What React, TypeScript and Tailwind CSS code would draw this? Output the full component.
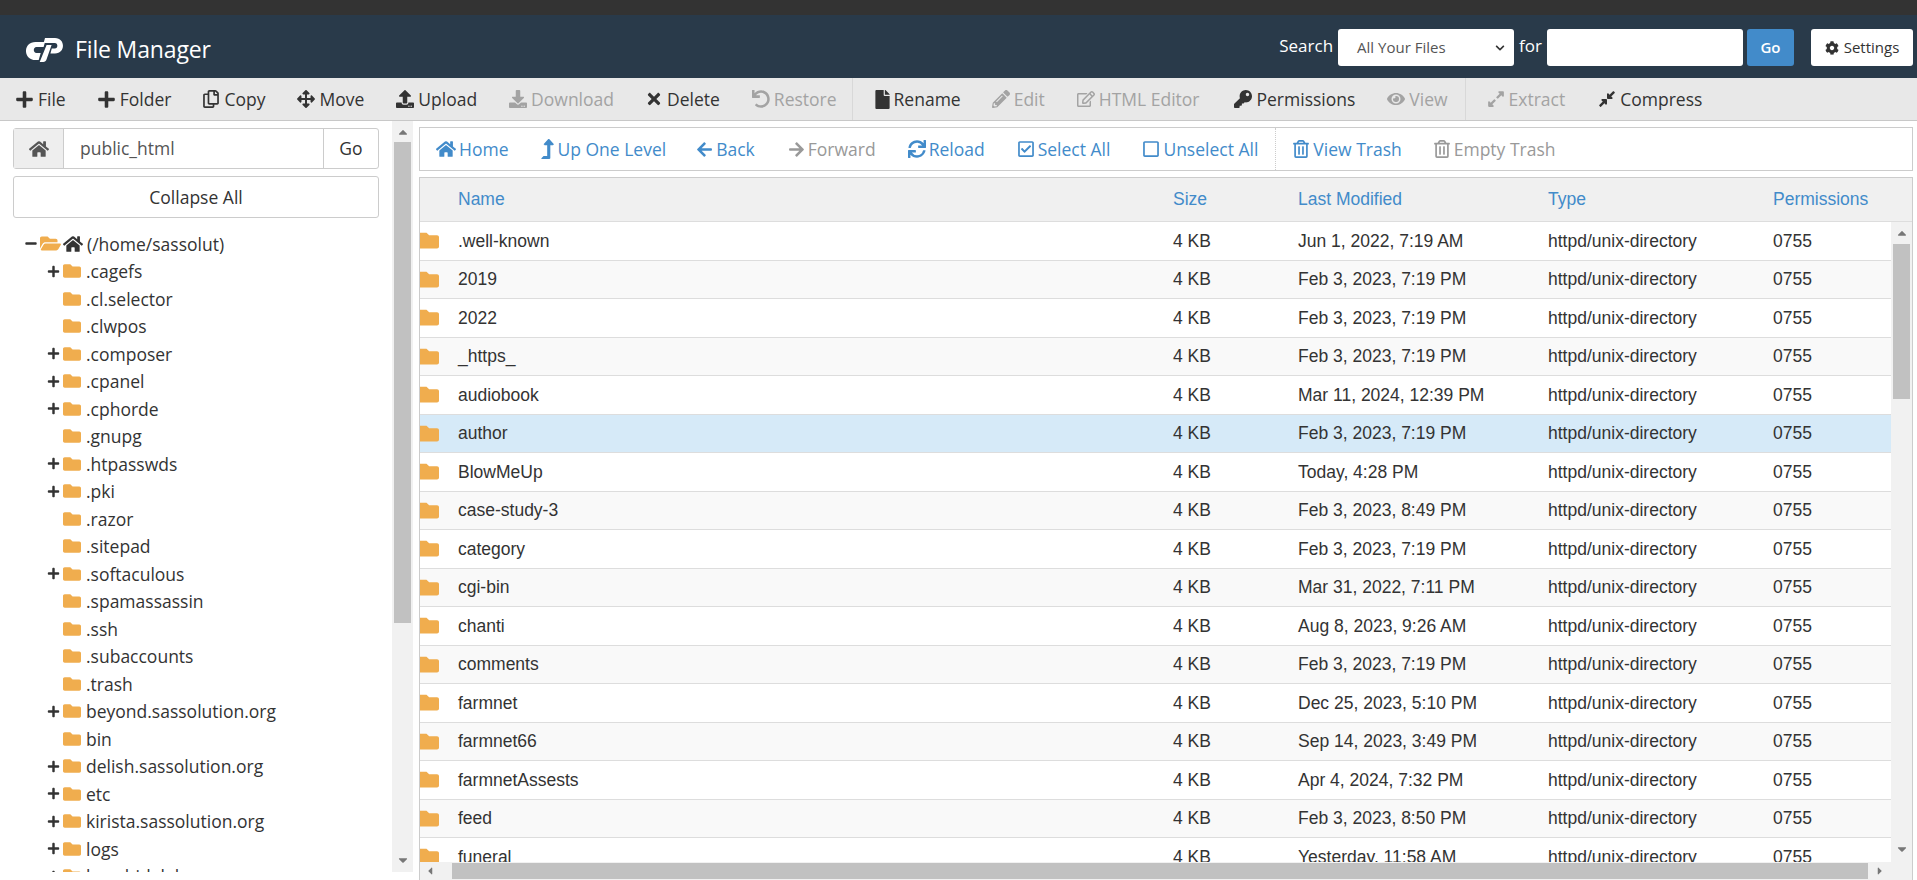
import { ReactNode } from "react";
import {
  FaPlus,
  FaFolder,
  FaFolderOpen,
  FaRegCopy,
  FaArrowsAlt,
  FaUpload,
  FaDownload,
  FaTimes,
  FaUndo,
  FaFile,
  FaPencilAlt,
  FaRegEdit,
  FaKey,
  FaEye,
  FaExpandAlt,
  FaCompressAlt,
  FaHome,
  FaLevelUpAlt,
  FaArrowLeft,
  FaArrowRight,
  FaSync,
  FaRegCheckSquare,
  FaRegSquare,
  FaRegTrashAlt,
  FaCog,
  FaMinus,
  FaCaretUp,
  FaCaretDown,
  FaCaretLeft,
  FaCaretRight,
  FaChevronDown,
} from "react-icons/fa";

const openSans = "font-['Open_Sans',sans-serif]";

const CpLogo = () => (
  <svg viewBox="0 0 37 24" className="h-[24px] w-[37px] fill-white">
    <path d="M9.5 4H19l-1.4 5H10.5c-3.6 0-3.6 6 0 6h4.2L12.7 22H9.5C-3.2 22-3.2 4 9.5 4z" />
    <path d="M19 0h10c10.6 0 10.6 15.5 0 15.5h-4.6l1.4-5h3c3.4 0 3.4-5.5 0-5.5H17.6z" />
    <path d="M20.6 7h5L20.5 21.5c-.5 1.6-1.6 2.5-3.2 2.5h-3.6z" />
  </svg>
);

const ToolButton = ({ icon, label, off, className }: { icon: ReactNode; label: string; off?: boolean; className?: string }) => (
  <span className={`flex items-center gap-[4px] ${off ? "text-[#a3a3a3]" : "text-[#333]"} ${className ?? ""}`}>
    {icon}
    {label}
  </span>
);

const NavButton = ({ icon, label, off, className }: { icon: ReactNode; label: string; off?: boolean; className?: string }) => (
  <span className={`flex items-center gap-[3px] ${off ? "text-[#999]" : "text-[#428bca]"} ${className ?? ""}`}>
    {icon}
    {label}
  </span>
);

const tree: [string, boolean][] = [
  [".cagefs", true],
  [".cl.selector", false],
  [".clwpos", false],
  [".composer", true],
  [".cpanel", true],
  [".cphorde", true],
  [".gnupg", false],
  [".htpasswds", true],
  [".pki", true],
  [".razor", false],
  [".sitepad", false],
  [".softaculous", true],
  [".spamassassin", false],
  [".ssh", false],
  [".subaccounts", false],
  [".trash", false],
  ["beyond.sassolution.org", true],
  ["bin", false],
  ["delish.sassolution.org", true],
  ["etc", true],
  ["kirista.sassolution.org", true],
  ["logs", true],
  ["lmachidelel", true],
];

const files: [string, string][] = [
  [".well-known", "Jun 1, 2022, 7:19 AM"],
  ["2019", "Feb 3, 2023, 7:19 PM"],
  ["2022", "Feb 3, 2023, 7:19 PM"],
  ["_https_", "Feb 3, 2023, 7:19 PM"],
  ["audiobook", "Mar 11, 2024, 12:39 PM"],
  ["author", "Feb 3, 2023, 7:19 PM"],
  ["BlowMeUp", "Today, 4:28 PM"],
  ["case-study-3", "Feb 3, 2023, 8:49 PM"],
  ["category", "Feb 3, 2023, 7:19 PM"],
  ["cgi-bin", "Mar 31, 2022, 7:11 PM"],
  ["chanti", "Aug 8, 2023, 9:26 AM"],
  ["comments", "Feb 3, 2023, 7:19 PM"],
  ["farmnet", "Dec 25, 2023, 5:10 PM"],
  ["farmnet66", "Sep 14, 2023, 3:49 PM"],
  ["farmnetAssests", "Apr 4, 2024, 7:32 PM"],
  ["feed", "Feb 3, 2023, 8:50 PM"],
  ["funeral", "Yesterday, 11:58 AM"],
];

const cols = "grid grid-cols-[38px_715px_125px_250px_225px_1fr] items-center";

export default function App() {
  return (
    <div className={`flex h-[880px] w-full flex-col overflow-hidden bg-white ${openSans}`}>
      <div className="h-[15px] bg-[#333333]" />

      {/* Header */}
      <header className="flex h-[63px] items-center bg-[#293a4a] pl-[26px] pr-[4px] pt-[4px] text-white">
        <div className="mt-[2px] flex items-center">
          <CpLogo />
          <span className="ml-[12px] text-[23px] tracking-[-0.15px]">File Manager</span>
        </div>
        <div className="-mt-[2px] ml-auto flex items-center">
          <span className="mb-[3px] mr-[5px] text-[17px]">Search</span>
          <div className="flex h-[37px] w-[176px] items-center justify-between rounded-[3px] bg-white pl-[19px] pr-[9px] text-[15px] text-[#555]">
            All Your Files
            <FaChevronDown className="text-[10px] text-[#333]" />
          </div>
          <span className="mx-[5px] mb-[3px] text-[17px]">for</span>
          <div className="h-[37px] w-[196px] rounded-[3px] bg-white" />
          <div className="ml-[4px] flex h-[37px] w-[47px] items-center justify-center rounded-[3px] bg-[#428bca] text-[15px] font-semibold">
            Go
          </div>
          <div className="ml-[17px] flex h-[37px] w-[102px] items-center justify-center gap-[5px] rounded-[3px] bg-white text-[15px] text-[#333]">
            <FaCog className="text-[14px]" />
            Settings
          </div>
        </div>
      </header>

      {/* Toolbar */}
      <nav className="flex h-[43px] items-center border-b border-[#c8c8c8] bg-[#e8e8e8] text-[17.5px]">
        <ToolButton className="ml-[15px]" icon={<FaPlus className="text-[19px]" />} label="File" />
        <ToolButton className="ml-[31px]" icon={<FaPlus className="text-[19px]" />} label="Folder" />
        <ToolButton className="ml-[31px]" icon={<FaRegCopy className="text-[18px]" />} label="Copy" />
        <ToolButton className="ml-[32px]" icon={<FaArrowsAlt className="text-[18px]" />} label="Move" />
        <ToolButton className="ml-[32px]" icon={<FaUpload className="text-[18px]" />} label="Upload" />
        <ToolButton off className="ml-[32px]" icon={<FaDownload className="text-[18px]" />} label="Download" />
        <ToolButton className="ml-[31px]" icon={<FaTimes className="text-[18px]" />} label="Delete" />
        <ToolButton off className="ml-[32px]" icon={<FaUndo className="text-[18px]" />} label="Restore" />
        <span className="ml-[15px] h-full border-l border-[#d8d8d8]" />
        <ToolButton className="ml-[22px]" icon={<FaFile className="h-[19px] w-[15px]" />} label="Rename" />
        <ToolButton off className="ml-[31px]" icon={<FaPencilAlt className="text-[18px]" />} label="Edit" />
        <ToolButton off className="ml-[32px]" icon={<FaRegEdit className="text-[18px]" />} label="HTML Editor" />
        <ToolButton className="ml-[34px] gap-[5px]" icon={<FaKey className="text-[18px]" />} label="Permissions" />
        <ToolButton off className="ml-[32px]" icon={<FaEye className="text-[18px]" />} label="View" />
        <span className="ml-[17px] h-full border-l border-[#d8d8d8]" />
        <ToolButton off className="ml-[21px]" icon={<FaExpandAlt className="text-[18px]" />} label="Extract" />
        <ToolButton className="ml-[33px]" icon={<FaCompressAlt className="text-[18px]" />} label="Compress" />
      </nav>

      <div className="flex min-h-0 flex-1">
        {/* Left tree */}
        <aside className="flex h-[751px] w-[392px] flex-col overflow-hidden pl-[13px] pr-[13px] pt-[7px] text-[17.5px] text-[#333]">
          <div className="flex h-[41px] shrink-0 rounded-[3px] border border-[#ccc]">
            <div className="flex w-[50px] items-center justify-center border-r border-[#ccc] bg-[#eee] text-[#555]">
              <FaHome className="text-[20px]" />
            </div>
            <div className="flex flex-1 items-center pl-[16px] text-[#555]">public_html</div>
            <div className="flex w-[55px] items-center justify-center border-l border-[#ccc]">Go</div>
          </div>
          <div className="mt-[7px] flex h-[42px] shrink-0 items-center justify-center rounded-[3px] border border-[#ccc]">Collapse All</div>
          <ul className="mt-[12px] pl-[12px]">
            <li className="flex h-[27.5px] items-center">
              <FaMinus className="w-[12px] text-[13px]" />
              <FaFolderOpen className="ml-[3px] text-[21px] text-[#f0ad4e]" />
              <FaHome className="ml-[2px] text-[20px]" />
              <span className="ml-[4px]">(/home/sassolut)</span>
            </li>
            {tree.map(([name, more]) => (
              <li key={name} className="flex h-[27.5px] items-center pl-[22px]">
                <span className="flex w-[12px] justify-center">{more && <FaPlus className="shrink-0 text-[13px]" />}</span>
                <FaFolder className="ml-[4px] text-[18px] text-[#f0ad4e]" />
                <span className="ml-[5px]">{name}</span>
              </li>
            ))}
          </ul>
        </aside>

        {/* Tree scrollbar */}
        <div className="flex h-[751px] w-[21px] flex-col items-center bg-[#f1f1f1] text-[#777]">
          <FaCaretUp className="mt-[4px] h-[14px] text-[12px]" />
          <div className="mt-[3px] h-[481px] w-[17px] bg-[#c1c1c1]" />
          <FaCaretDown className="mb-[5px] mt-auto h-[14px] text-[12px]" />
        </div>

        {/* Right panel */}
        <main className="ml-[6px] flex w-[1494px] flex-col pt-[6px] text-[17.5px]">
          <div className="flex h-[44px] shrink-0 items-center border border-[#ccc]">
            <NavButton className="ml-[16px]" icon={<FaHome className="text-[20px]" />} label="Home" />
            <NavButton className="ml-[33px]" icon={<FaLevelUpAlt className="h-[20px] w-[13px]" />} label="Up One Level" />
            <NavButton className="ml-[30px]" icon={<FaArrowLeft className="text-[17px]" />} label="Back" />
            <NavButton off className="ml-[33px]" icon={<FaArrowRight className="text-[17px]" />} label="Forward" />
            <NavButton className="ml-[32px]" icon={<FaSync className="text-[18px]" />} label="Reload" />
            <NavButton className="ml-[32px]" icon={<FaRegCheckSquare className="text-[18px]" />} label="Select All" />
            <NavButton className="ml-[32px]" icon={<FaRegSquare className="text-[18px]" />} label="Unselect All" />
            <span className="ml-[17px] h-full border-l border-dotted border-[#ccc]" />
            <NavButton className="ml-[16px]" icon={<FaRegTrashAlt className="text-[18px]" />} label="View Trash" />
            <NavButton off className="ml-[31px]" icon={<FaRegTrashAlt className="text-[18px]" />} label="Empty Trash" />
          </div>

          <div className="mt-[6px] flex min-h-0 flex-1 flex-col border-l border-r border-t border-[#ccc] font-['Liberation_Sans',sans-serif] text-[#333]">
            <div className={`${cols} h-[44px] shrink-0 border-b border-[#ddd] bg-[#f0f0f0] text-[#428bca]`}>
              <span />
              <span>Name</span>
              <span>Size</span>
              <span>Last Modified</span>
              <span>Type</span>
              <span>Permissions</span>
            </div>

            <div className="relative min-h-0 flex-1 overflow-hidden">
              {files.map(([name, modified], i) => (
                <div
                  key={name}
                  className={`${cols} h-[38.5px] border-b border-[#ddd] ${name === "author" ? "bg-[#d6eaf8]" : i % 2 ? "bg-[#f9f9f9]" : "bg-white"}`}
                >
                  <FaFolder className="-ml-[2px] text-[21px] text-[#f0ad4e]" />
                  <span>{name}</span>
                  <span>4 KB</span>
                  <span>{modified}</span>
                  <span>httpd/unix-directory</span>
                  <span>0755</span>
                </div>
              ))}

              {/* Vertical scrollbar */}
              <div className="absolute bottom-0 right-0 top-0 flex w-[21px] flex-col items-center bg-[#f1f1f1] pb-[24px] text-[#777]">
                <FaCaretUp className="mt-[4px] h-[14px] text-[12px]" />
                <div className="mt-[4px] h-[155px] w-[17px] bg-[#c1c1c1]" />
                <FaCaretDown className="mt-auto h-[14px] text-[12px]" />
              </div>

              {/* Horizontal scrollbar */}
              <div className="absolute bottom-0 left-0 right-0 flex h-[18px] items-center bg-[#f1f1f1] text-[#777]">
                <FaCaretLeft className="ml-[3px] w-[14px] text-[12px]" />
                <div className="ml-[15px] h-[16px] w-[1416px] bg-[#c1c1c1]" />
                <FaCaretRight className="ml-[5px] w-[14px] text-[12px]" />
              </div>
            </div>
          </div>
        </main>
      </div>
    </div>
  );
}
